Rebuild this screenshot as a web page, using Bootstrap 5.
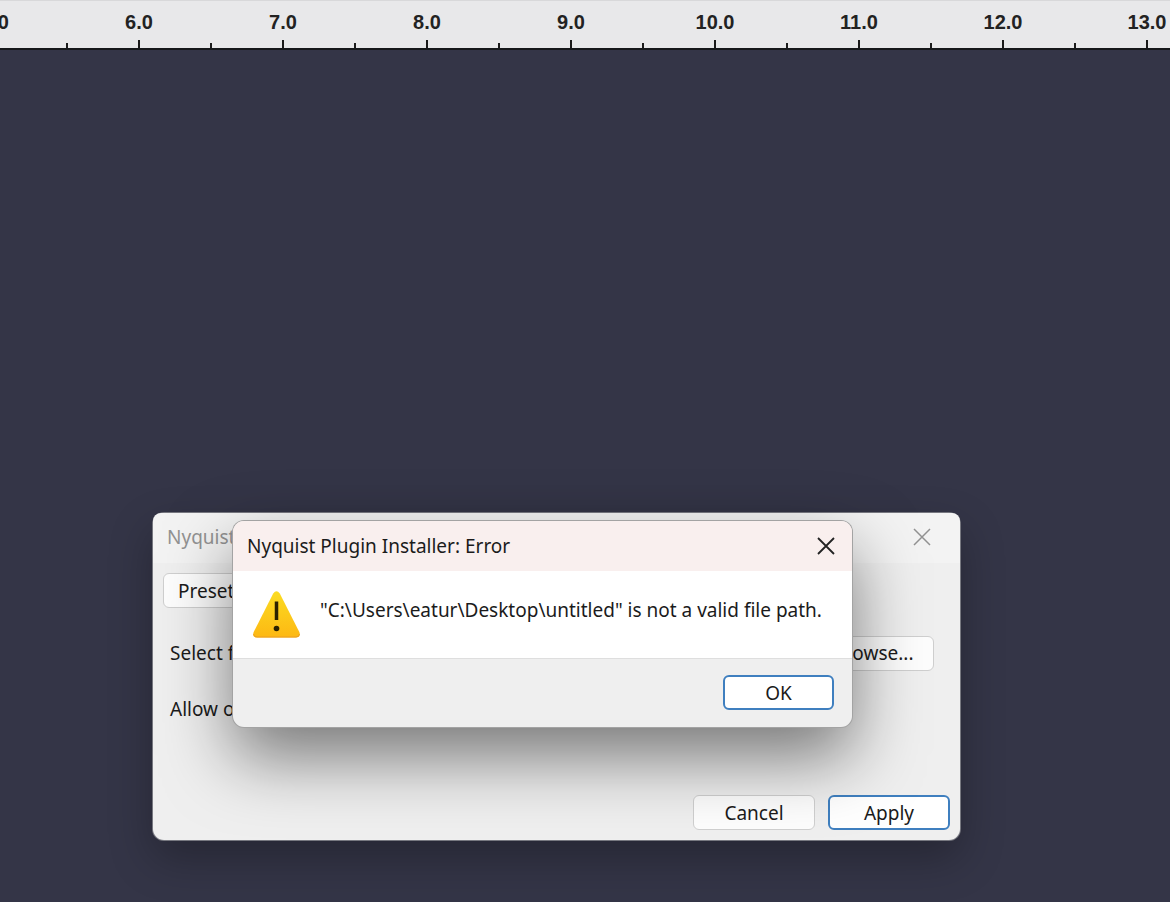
<!DOCTYPE html>
<html lang="en">
<head>
<meta charset="utf-8">
<meta name="viewport" content="width=device-width, initial-scale=1">
<title>Nyquist Plugin Installer</title>
<link href="https://cdn.jsdelivr.net/npm/bootstrap@5.3.0/dist/css/bootstrap.min.css" rel="stylesheet">
<style>
  body { background: #343547; font-family: "Noto Sans", "Open Sans", sans-serif; font-size: 19px; line-height: 26px; color: #1b1b1b; }

  /* Timeline: one cell per second, major tick in the middle, minor tick on the left edge */
  .ruler { height: 50px; background: #e8e8ea; border-bottom: 2px solid #16181b; box-shadow: inset 0 1px #d8d8da; font: bold 20px/26px "Liberation Sans", sans-serif; color: #222; }
  .ruler-track { margin-left: -77px; }
  .second { flex: 0 0 144px; height: 48px; padding-top: 9px; }
  .second::before, .second::after { content: ""; position: absolute; bottom: 0; width: 2px; background: #1b1b1b; }
  .second::before { left: -1px; height: 5px; }
  .second::after { left: calc(50% - 1px); height: 8px; }

  .window { border-radius: 11px; }
  .parent-window { left: 153px; top: 513px; width: 807px; background: #efefef; box-shadow: 0 0 0 1px #777880, 0 18px 44px rgba(0,0,0,.28); }
  .error-window { left: 80px; top: 8px; width: 619px; background: #efefef; box-shadow: 0 0 0 1px #a3a3a3, 0 30px 68px rgba(0,0,0,.5); }
  .titlebar { height: 50px; padding: 0 14px; }
  .parent-window > .titlebar { background: #f3f3f3; color: #929292; padding-bottom: 2px; }
  .error-window > .titlebar { background: #f9efee; }
  .window-btn { border: 0; background: none; padding: 0; width: 24px; height: 24px; line-height: 0; color: inherit; }
  .caption-gap { gap: 59px; padding-right: 12px; }

  .form-area { padding: 10px; }
  .field-row { height: 36px; padding-left: 7px; margin-top: 20px; }
  .field-row.first { margin-top: 27px; }
  .dlg-btn { height: 35px; padding: 0; border: 1px solid #cfcfcf; border-radius: 6px; background: #fdfdfd; font-size: 19px; line-height: 26px; color: #1b1b1b; }
  .dlg-btn.primary { border: 2px solid #3f7fbf; background: #fff; }
  .preset-btn { padding-left: 14px; }
  .w-action { width: 122px; }
  .w-ok { width: 111px; }
  .overwrite-select { width: 398px; height: 36px; border: 1px solid #c4c4c4; border-bottom-color: #777; border-radius: 6px; background: #fdfdfd; }
  .action-row { margin-top: 68px; gap: 13px; }
  .message { background: #fff; border-bottom: 1px solid #dedede; padding: 18px 18px 19px 19px; gap: 19px; }
  .error-footer { padding: 16px 18px 17px; }
</style>
</head>
<body class="vh-100 overflow-hidden position-relative">
  <header class="ruler overflow-hidden">
    <div class="ruler-track d-flex text-center">
      <div class="second position-relative">5.0</div>
      <div class="second position-relative">6.0</div>
      <div class="second position-relative">7.0</div>
      <div class="second position-relative">8.0</div>
      <div class="second position-relative">9.0</div>
      <div class="second position-relative">10.0</div>
      <div class="second position-relative">11.0</div>
      <div class="second position-relative">12.0</div>
      <div class="second position-relative">13.0</div>
    </div>
  </header>

  <main class="window parent-window position-absolute">
    <div class="titlebar d-flex align-items-center justify-content-between rounded-top-3">
      <span>Nyquist</span>
      <div class="d-flex align-items-center caption-gap">
        <button class="window-btn" type="button" aria-label="Maximize"><svg width="24" height="24" fill="none" stroke="#555"><rect x="4.500" y="4.500" width="16" height="16" rx="2"/></svg></button>
        <button class="window-btn" type="button" aria-label="Close"><svg width="24" height="24" fill="none" stroke="#929292" stroke-width="1.500"><path d="M4 4 20 20M20 4 4 20"/></svg></button>
      </div>
    </div>
    <div class="form-area">
      <button class="dlg-btn preset-btn w-action d-block text-start" type="button">Preset</button>
      <div class="field-row first d-flex align-items-center justify-content-between me-3">
        <span>Select f</span>
        <button class="dlg-btn w-action" type="button">Browse...</button>
      </div>
      <div class="field-row d-flex align-items-center">
        <label for="overwrite">Allow o</label>
        <select id="overwrite" class="overwrite-select mx-auto"></select>
      </div>
      <div class="action-row d-flex justify-content-end">
        <button class="dlg-btn w-action" type="button">Cancel</button>
        <button class="dlg-btn primary w-action" type="button">Apply</button>
      </div>
    </div>

    <section class="window error-window position-absolute overflow-hidden" role="alertdialog" aria-labelledby="error-title">
      <div class="titlebar d-flex align-items-center justify-content-between">
        <span id="error-title">Nyquist Plugin Installer: Error</span>
        <button class="window-btn" type="button" aria-label="Close"><svg width="24" height="24" fill="none" stroke="#222" stroke-width="1.800"><path d="M4 4 20 20M20 4 4 20"/></svg></button>
      </div>
      <div class="message d-flex align-items-start">
        <svg class="flex-shrink-0" width="49" height="50" viewBox="0 0 49 50" aria-hidden="true">
          <defs><linearGradient id="amber" x1="0" y1="0" x2="0" y2="1"><stop offset="0" stop-color="#fbdc22"/><stop offset="1" stop-color="#fdb813"/></linearGradient></defs>
          <path d="M21.200 4.500Q24.500-.2 27.800 4.500L47.300 43Q49.200 48.500 44 48.500H5Q-.2 48.500 1.700 43Z" fill="url(#amber)"/>
          <path d="M1.500 45Q2 48 5 48H44Q47 48 47.500 45" fill="none" stroke="#ea9f24"/>
          <path d="M24.500 12.500V31" stroke="#2b2100" stroke-width="3.500"/><circle cx="24.500" cy="39.500" r="2.800" fill="#2b2100"/>
        </svg>
        <span class="text-nowrap pt-2">"C:\Users\eatur\Desktop\untitled" is not a valid file path.</span>
      </div>
      <div class="error-footer d-flex justify-content-end">
        <button class="dlg-btn primary w-ok" type="button">OK</button>
      </div>
    </section>
  </main>
<script src="https://cdn.jsdelivr.net/npm/bootstrap@5.3.0/dist/js/bootstrap.bundle.min.js"></script>
</body>
</html>
